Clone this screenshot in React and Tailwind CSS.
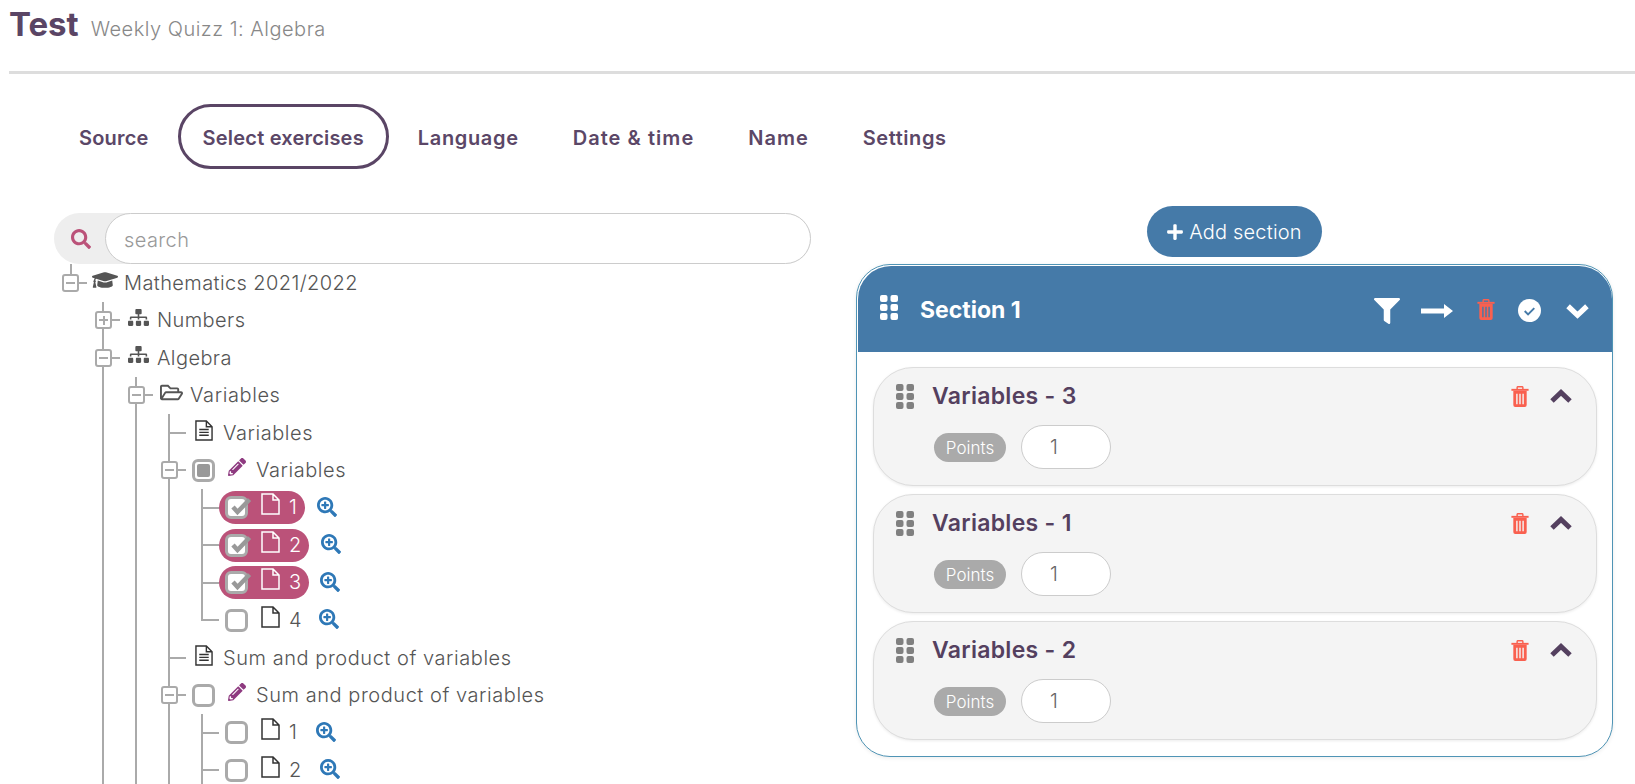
import {
  FaGraduationCap,
  FaSitemap,
  FaRegFolderOpen,
  FaPencilAlt,
  FaSearch,
  FaSearchPlus,
  FaFilter,
  FaPlus,
} from "react-icons/fa";

const tabs = [
  { name: "Source", spacing: "tracking-[0.2px]" },
  { name: "Select exercises", spacing: "tracking-[0.2px]", active: true },
  { name: "Language", spacing: "tracking-[0.65px]" },
  { name: "Date & time", spacing: "tracking-[1.05px]" },
  { name: "Name", spacing: "tracking-[1px]" },
  { name: "Settings", spacing: "tracking-[0.55px]" },
];
const cards = ["Variables - 3", "Variables - 1", "Variables - 2"];

function Grip({ className }) {
  return (
    <svg viewBox="0 0 18 25" className={className} fill="currentColor">
      <rect x="0" y="0" width="7.5" height="7" rx="2" />
      <rect x="10.5" y="0" width="7.5" height="7" rx="2" />
      <rect x="0" y="9" width="7.5" height="7" rx="2" />
      <rect x="10.5" y="9" width="7.5" height="7" rx="2" />
      <rect x="0" y="18" width="7.5" height="7" rx="2" />
      <rect x="10.5" y="18" width="7.5" height="7" rx="2" />
    </svg>
  );
}

function Trash({ className }) {
  return (
    <svg viewBox="0 0 18 22" className={className} fill="currentColor">
      <path d="M6 3.5 V1.5 Q6 .7 7 .7 H11 Q12 .7 12 1.5 V3.5" fill="none" stroke="currentColor" strokeWidth="1.5" />
      <rect x="0" y="3" width="18" height="2" />
      <path
        fillRule="evenodd"
        d="M2 5 H16 V20 Q16 22 14 22 H4 Q2 22 2 20 Z M5 8 V19 H6.5 V8 Z M8.25 8 V19 H9.75 V8 Z M11.5 8 V19 H13 V8 Z"
      />
    </svg>
  );
}

function Chevron({ up, className }) {
  return (
    <svg viewBox="0 0 22 14" className={className} fill="none" stroke="currentColor" strokeWidth="5">
      <path d={up ? "M2 12 L11 3.5 L20 12" : "M2 2 L11 10.5 L20 2"} />
    </svg>
  );
}

function FileIcon({ lines, className }) {
  return (
    <svg viewBox="0 0 19 22" className={className} fill="none" stroke="currentColor" strokeWidth="1.5">
      <path d="M1 1 H12 L18 7 V21 H1 Z M12 1 V7 H18" />
      {lines && <path d="M4.5 10 H14.5 M4.5 13 H14.5 M4.5 16 H14.5" />}
    </svg>
  );
}

function Toggle({ open }) {
  return (
    <div className="relative z-10 flex h-[18px] w-[17px] shrink-0 items-center justify-center rounded-[3px] border-2 border-[#aaaaaa] bg-white">
      <div className="h-[2px] w-[9px] bg-[#aaaaaa]" />
      {!open && <div className="absolute h-[9px] w-[2px] bg-[#aaaaaa]" />}
    </div>
  );
}

function Stub({ leaf }) {
  return leaf ? (
    <div className="ml-[8px] h-[2px] w-[17px] shrink-0 bg-[#aaaaaa]" />
  ) : (
    <div className="h-[2px] w-[8px] shrink-0 bg-[#aaaaaa]" />
  );
}

function Checkbox({ state }) {
  return (
    <div className="relative flex h-[23px] w-[23px] shrink-0 items-center justify-center rounded-[6px] border-[3px] border-[#aaaaaa] bg-white">
      {state === "some" && <div className="h-[13px] w-[13px] rounded-[2px] bg-[#999999]" />}
      {state === "on" && (
        <svg viewBox="0 0 28 23" className="absolute left-[-3px] top-[-3px] h-[23px] w-[28px]" fill="none" stroke="#999999" strokeWidth="4.5">
          <path d="M8 11 L12.5 16 L24.5 3.5" />
        </svg>
      )}
    </div>
  );
}

function Row({ children }) {
  return (
    <div className="flex h-[37.5px] items-center text-[20px] font-light leading-[24px] tracking-[0.4px] text-[#555555]">
      {children}
    </div>
  );
}

function Branch({ children, last }) {
  return (
    <ul className="relative pl-[33px]">
      <div className={`absolute left-[40px] top-0 w-[2px] bg-[#aaaaaa] ${last ? "bottom-[18px]" : "bottom-0"}`} />
      {children}
    </ul>
  );
}

function Exercise({ n, on, gap }) {
  return (
    <li>
      <Row>
        <Stub leaf />
        <div className={`flex h-[33px] items-center rounded-full pl-[6px] pr-[8px] ${on ? "bg-[#bb5279] text-white" : "text-[#555555]"}`}>
          <Checkbox state={on ? "on" : "off"} />
          <FileIcon className={`ml-[13px] mb-[7px] h-[22px] w-[19px] ${on ? "text-white" : "text-[#333333]"}`} />
          <span className={`ml-[9px] mb-[1px] ${n === "1" ? "w-[8px]" : "w-[12px]"}`}>{n}</span>
        </div>
        <FaSearchPlus className={`mb-[2px] text-[20px] text-[#2e78b7] ${gap}`} />
      </Row>
    </li>
  );
}

function Lesson({ title }) {
  return (
    <li>
      <Row>
        <Stub leaf />
        <FileIcon lines className="ml-[9px] mb-[5px] h-[21px] w-[18px] shrink-0 text-[#333333]" />
        <span className="ml-[10px] tracking-[0.55px]">{title}</span>
      </Row>
    </li>
  );
}

function Quiz({ title, state, children, last }) {
  return (
    <li>
      <Row>
        <Toggle open />
        <Stub />
        <div className="ml-[6px]">
          <Checkbox state={state} />
        </div>
        <FaPencilAlt className="ml-[13px] mb-[6px] shrink-0 text-[18px] text-[#8e3a80]" />
        <span className="ml-[10px] tracking-[0.55px]">{title}</span>
      </Row>
      <Branch last={last}>{children}</Branch>
    </li>
  );
}

function Tree() {
  return (
    <div className="relative pl-[8px]">
      <div className="absolute left-[16px] top-0 h-[12px] w-[2px] bg-[#aaaaaa]" />
      <Row>
        <Toggle open />
        <Stub />
        <FaGraduationCap className="ml-[5px] mb-[5px] text-[26px] text-[#555555]" />
        <span className="ml-[6px]">Mathematics 2021/2022</span>
      </Row>
      <Branch>
        <li>
          <Row>
            <Toggle />
            <Stub />
            <FaSitemap className="ml-[8px] mb-[6px] text-[21px] text-[#555555]" />
            <span className="ml-[8px]">Numbers</span>
          </Row>
        </li>
        <li>
          <Row>
            <Toggle open />
            <Stub />
            <FaSitemap className="ml-[8px] mb-[6px] text-[21px] text-[#555555]" />
            <span className="ml-[8px]">Algebra</span>
          </Row>
          <Branch>
            <li>
              <Row>
                <Toggle open />
                <Stub />
                <FaRegFolderOpen className="ml-[7px] mb-[6px] text-[23px] text-[#555555]" />
                <span className="ml-[7px] tracking-[0.6px]">Variables</span>
              </Row>
              <Branch>
                <Lesson title="Variables" />
                <Quiz title="Variables" state="some" last>
                  <Exercise n="1" on gap="ml-[12px]" />
                  <Exercise n="2" on gap="ml-[12px]" />
                  <Exercise n="3" on gap="ml-[11px]" />
                  <Exercise n="4" gap="ml-[10px]" />
                </Quiz>
                <Lesson title="Sum and product of variables" />
                <Quiz title="Sum and product of variables" state="off">
                  <Exercise n="1" gap="ml-[11px]" />
                  <Exercise n="2" gap="ml-[11px]" />
                </Quiz>
              </Branch>
            </li>
          </Branch>
        </li>
      </Branch>
    </div>
  );
}

function Card({ title }) {
  return (
    <div className="h-[119px] rounded-[40px] border border-[#dddddd] bg-[#f4f4f4] pl-[22px] pr-[24px] pt-[12px] shadow-[0_1px_3px_rgba(0,0,0,0.08)]">
      <div className="flex items-center">
        <Grip className="h-[25px] w-[18px] text-[#808080]" />
        <span className="ml-[18px] text-[23px] font-semibold leading-[32px] tracking-[0.3px] text-[#54405f]">{title}</span>
        <Trash className="ml-auto h-[21px] w-[18px] text-[#f9604f]" />
        <Chevron up className="ml-[21px] h-[14px] w-[22px] text-[#54405f]" />
      </div>
      <div className="ml-[38px] mt-[13px] flex items-center">
        <span className="flex h-[29px] w-[72px] items-center justify-center rounded-full bg-[#aaaaaa] pt-[3px] text-[17px] font-light text-white">
          Points
        </span>
        <div className="ml-[15px] flex h-[44px] w-[90px] items-center rounded-full border border-[#cccccc] bg-white pl-[28px] text-[20px] font-light text-[#666666]">
          1
        </div>
      </div>
    </div>
  );
}

export default function App() {
  return (
    <div className="h-[784px] overflow-hidden bg-white font-['Inter',sans-serif]">
      <div className="ml-[9px] flex h-[74px] items-start border-b-[3px] border-[#dddddd] pt-[2px]">
        <h1 className="text-[33px] font-bold leading-[44px] text-[#5a4565]">Test</h1>
        <span className="ml-[12px] mt-[12px] text-[20px] font-light tracking-[0.5px] text-[#888888]">
          Weekly Quizz 1: Algebra
        </span>
      </div>

      <nav className="ml-[54px] mt-[30px] flex gap-[4px]">
        {tabs.map((t) => (
          <div
            key={t.name}
            className={`flex h-[65px] items-center rounded-full border-[3px] px-[22px] pt-[2px] text-[20px] font-semibold text-[#5b4767] ${t.spacing} ${
              t.active ? "border-[#5a4565]" : "border-transparent"
            }`}
          >
            {t.name}
          </div>
        ))}
      </nav>

      <div className="mt-[37px] flex pl-[54px]">
        <div className="w-[757px] pt-[7px]">
          <div className="flex h-[51px] items-center rounded-full bg-[#eeeeee]">
            <FaSearch className="ml-[17px] text-[20px] text-[#bb5279]" />
            <div className="ml-[14px] flex h-[51px] flex-1 items-center rounded-full border border-[#cccccc] bg-white pl-[18px] pt-[2px] text-[20px] font-light tracking-[0.4px] text-[#999999]">
              search
            </div>
          </div>
          <Tree />
        </div>

        <div className="ml-[45px] w-[757px]">
          <div className="flex justify-center pr-[1px]">
            <button className="flex h-[51px] w-[175px] items-center justify-center gap-[5px] rounded-full bg-[#457aa8] text-[20px] font-light tracking-[0.2px] text-white">
              <FaPlus className="text-[18px]" />
              Add section
            </button>
          </div>
          <div className="mt-[7px] h-[493px] rounded-[34px] border border-[#4f94b5] bg-white shadow-[0_1px_4px_rgba(0,0,0,0.08)]">
            <div className="ml-[1px] mt-[1px] flex h-[86px] items-start rounded-t-[33px] bg-[#457aa8] pl-[22px] pr-[23px] pt-[29px] text-white">
              <Grip className="h-[25px] w-[18px] text-white" />
              <span className="ml-[22px] mt-[-1px] text-[23px] font-bold leading-[32px]">Section 1</span>
              <FaFilter className="ml-auto mt-[3px] text-[26px]" />
              <svg viewBox="0 0 32 14" className="ml-[21px] mt-[9px] h-[14px] w-[32px]" fill="currentColor">
                <path d="M0 4.5 H23 V0 L32 7 L23 14 V9.5 H0 Z" />
              </svg>
              <Trash className="ml-[24px] mt-[4px] h-[21px] w-[18px] text-[#f9604f]" />
              <svg viewBox="0 0 24 24" className="ml-[23px] mt-[4px] h-[23px] w-[23px]">
                <circle cx="12" cy="12" r="12" fill="white" />
                <path d="M7 12.5 L10.5 16 L17 9.5" fill="none" stroke="#457aa8" strokeWidth="2" />
              </svg>
              <Chevron className="ml-[25px] mt-[9px] h-[15px] w-[23px]" />
            </div>
            <div className="flex flex-col gap-[8px] pl-[16px] pr-[15px] pt-[15px]">
              {cards.map((c) => (
                <Card key={c} title={c} />
              ))}
            </div>
          </div>
        </div>
      </div>
    </div>
  );
}
